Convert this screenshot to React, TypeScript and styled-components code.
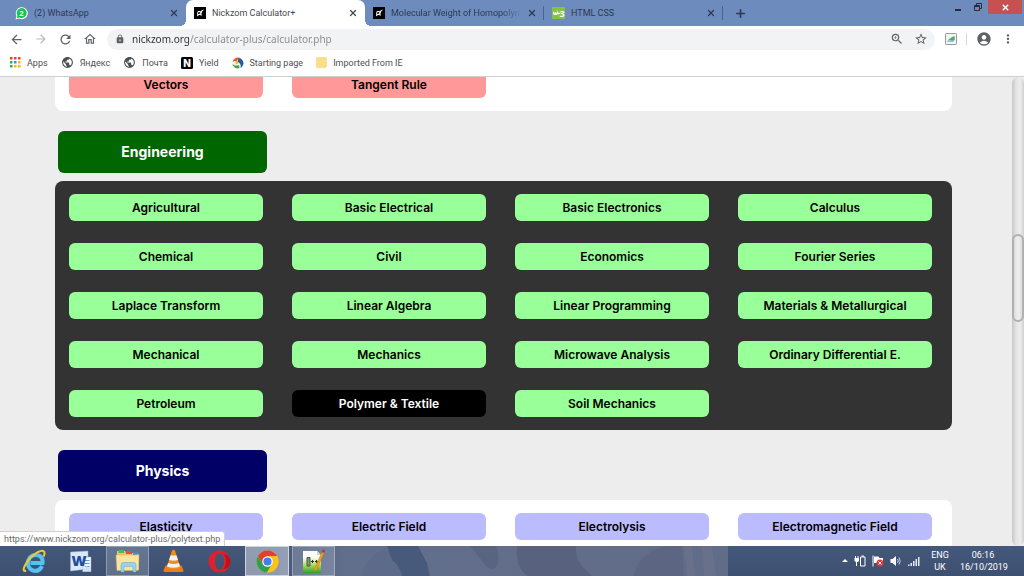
import React from "react";
import styled, { createGlobalStyle, css } from "styled-components";
import { Plus, X } from "lucide-react";
import {
  MdAccountCircle,
  MdArrowBack,
  MdArrowForward,
  MdLock,
  MdMoreVert,
  MdOutlineHome,
  MdPublic,
  MdRefresh,
  MdStarBorder,
  MdZoomIn,
} from "react-icons/md";

const UI_FONT = `Roboto, "Noto Sans", sans-serif`;
const ADDRESS_FONT = `"Noto Sans", "Open Sans", sans-serif`;
const PAGE_FONT = `Inter, "Open Sans", sans-serif`;

const GlobalStyle = createGlobalStyle`
  *, *::before, *::after { box-sizing: border-box; }
  html, body, #root { height: 100%; margin: 0; }
  body { overflow: hidden; background: #ededed; font-family: ${UI_FONT}; }
  button { margin: 0; padding: 0; border: 0; background: none; font: inherit; color: inherit; cursor: pointer; }
  a { color: inherit; text-decoration: none; }
  svg { display: block; flex: none; }
`;

const Screen = styled.div`
  display: flex;
  flex-direction: column;
  height: 100vh;
`;

/* ---------- browser chrome ---------- */

const TabStrip = styled.div`
  display: flex;
  flex: none;
  height: 26px;
  padding-left: 7px;
  background: #6d8bbd;
  color: #2c3a52;
`;

const TabItem = styled.div<{ $active?: boolean; $divider?: boolean }>`
  position: relative;
  display: flex;
  align-items: center;
  gap: 6px;
  flex: 0 1 179px;
  min-width: 0;
  padding: 0 7px 0 8px;
  border-radius: 7px 7px 0 0;
  ${(p) => p.$active && css`
    background: #fff;
    color: #45494d;
    &::before, &::after {
      content: "";
      position: absolute;
      bottom: 0;
      width: 6px;
      height: 6px;
    }
    &::before { right: 100%; background: radial-gradient(circle at 0 0, transparent 6px, #fff 6px); }
    &::after { left: 100%; background: radial-gradient(circle at 100% 0, transparent 6px, #fff 6px); }
  `}
  ${(p) => p.$divider && css`
    &::after {
      content: "";
      position: absolute;
      right: 0;
      top: 6px;
      width: 1px;
      height: 14px;
      background: #4c628a;
    }
  `}
`;

const TabTitle = styled.button<{ $fade?: boolean }>`
  flex: 1;
  min-width: 0;
  overflow: hidden;
  white-space: nowrap;
  text-align: left;
  font-size: 9px;
  line-height: 14px;
  ${(p) => p.$fade && css`
    mask-image: linear-gradient(to right, #000 85%, transparent);
  `}
`;

const IconButton = styled.button<{ $muted?: boolean }>`
  display: grid;
  place-items: center;
  flex: none;
  color: ${(p) => (p.$muted ? "#b9bbbe" : "inherit")};
`;

const NewTab = styled(IconButton)`
  width: 34px;
`;

const WindowControls = styled.div`
  display: flex;
  align-items: flex-start;
  margin-left: auto;
  padding-right: 2px;
`;

const WindowButton = styled.button<{ $close?: boolean }>`
  display: grid;
  place-items: center;
  width: ${(p) => (p.$close ? 34 : 20)}px;
  height: 14px;
  background: ${(p) => (p.$close ? "#c75050" : "transparent")};
  color: ${(p) => (p.$close ? "#fff" : "#252c38")};
`;

const Toolbar = styled.div`
  display: flex;
  align-items: center;
  flex: none;
  gap: 10px;
  height: 26px;
  padding: 0 9px;
  background: #fff;
  color: #5f6368;
`;

const Omnibox = styled.label`
  display: flex;
  align-items: center;
  flex: 1;
  height: 21px;
  padding: 0 7px 0 8px;
  border-radius: 11px;
  background: #f1f3f4;
`;

const Address = styled.input`
  flex: 1;
  min-width: 0;
  height: 18px;
  margin: 0 0 0 7px;
  padding: 0;
  border: 0;
  outline: 0;
  font: 10px/18px ${ADDRESS_FONT};
  color: transparent;
  background: linear-gradient(to right, #2b2d30 57px, #85898d 57px);
  background-clip: text;
`;

const OmniActions = styled.div`
  display: flex;
  gap: 10px;
`;

const ToolbarEnd = styled.div`
  display: flex;
  align-items: center;
  gap: 9px;
`;

const Separator = styled.span`
  width: 1px;
  height: 12px;
  background: #d5d7da;
`;

const Bookmarks = styled.nav`
  display: flex;
  align-items: center;
  flex: none;
  gap: 13px;
  height: 25px;
  padding: 0 10px 3px;
  border-bottom: 1px solid #cdcfd1;
  background: #fff;
  color: #4d5054;
`;

const Bookmark = styled.a`
  display: flex;
  align-items: center;
  gap: 6px;
  font-size: 9px;
  line-height: 14px;
  white-space: nowrap;
`;

/* ---------- page ---------- */

const Viewport = styled.div`
  position: relative;
  display: flex;
  flex: 1;
  min-height: 0;
  overflow: hidden;
  background: #ededed;
`;

const Page = styled.main`
  flex: 1;
  min-width: 0;
  margin-top: -19px;
  padding: 0 60px 0 55px;
  font-family: ${PAGE_FONT};
`;

const Panel = styled.div<{ $dark?: boolean }>`
  display: grid;
  grid-template-columns: repeat(4, 1fr);
  gap: 22px 29px;
  padding: 13px 20px 13px 14px;
  border-radius: 8px;
  background: ${(p) => (p.$dark ? "#333" : "#fff")};
`;

const Topic = styled.a<{ $color: string; $hovered?: boolean }>`
  display: grid;
  place-items: center;
  height: 27px;
  border-radius: 6px;
  background: ${(p) => (p.$hovered ? "#000" : p.$color)};
  color: ${(p) => (p.$hovered ? "#fff" : "#000")};
  font-size: 12px;
  font-weight: 600;
  line-height: 16px;
  white-space: nowrap;
`;

const CategoryButton = styled.button<{ $color: string }>`
  display: block;
  width: 209px;
  height: 42px;
  margin: 20px 0 8px 3px;
  border-radius: 6px;
  background: ${(p) => p.$color};
  color: #fff;
  font-size: 14px;
  font-weight: 700;
  line-height: 20px;
`;

const ScrollTrack = styled.div`
  display: flex;
  flex-direction: column;
  flex: none;
  width: 12px;
  border-radius: 6px;
  background: linear-gradient(to right, #c6c6c6, #e4e4e4 35%, #ececec 70%, #cfcfcf);
  &::before { content: ""; flex: 158; }
  &::after { content: ""; flex: 226; }
`;

const ScrollThumb = styled.div`
  flex: 85;
  border: 2px solid #b0b0b0;
  border-radius: 6px;
  background: linear-gradient(to right, #dcdcdc, #efefef 50%, #dedede);
`;

const StatusBubble = styled.div`
  position: absolute;
  left: 0;
  bottom: 0;
  height: 15px;
  padding: 0 4px;
  border-top: 1px solid #d0d0d0;
  border-right: 1px solid #d0d0d0;
  border-radius: 0 3px 0 0;
  background: #fff;
  color: #6a6a6a;
  font-size: 9px;
  line-height: 14px;
`;

/* ---------- taskbar ---------- */

const Taskbar = styled.footer`
  position: relative;
  display: flex;
  flex: none;
  height: 30px;
  padding-left: 11px;
  background: linear-gradient(#43587c, #3e5070);
  color: #fff;
`;

const Wallpaper = styled.svg`
  position: absolute;
  left: 280px;
  top: 0;
  width: 448px;
  height: 30px;
`;

const TaskButton = styled.button<{ $state?: "open" | "front" }>`
  position: relative;
  display: grid;
  place-items: center;
  width: 46px;
  border: 1px solid transparent;
  ${(p) => p.$state === "open" && css`
    width: 43px;
    border-color: rgba(255, 255, 255, 0.3);
    background: rgba(255, 255, 255, 0.18);
    margin: 0 1px 0 3px;
  `}
  ${(p) => p.$state === "front" && css`
    width: 44px;
    border-color: rgba(255, 255, 255, 0.55);
    background: rgba(255, 255, 255, 0.42);
    margin-left: 3px;
  `}
`;

const Tray = styled.div`
  position: relative;
  display: flex;
  align-items: center;
  gap: 6px;
  margin-left: auto;
  padding-right: 18px;
`;

const TrayText = styled.div<{ $width: number }>`
  width: ${(p) => p.$width}px;
  font-size: 9px;
  line-height: 12px;
  text-align: center;
  white-space: nowrap;
`;

/* ---------- icons ---------- */

const WhatsAppIcon = () => (
  <svg width="13" height="13" viewBox="0 0 26 26">
    <path d="M1 25l2-7A12 12 0 1 1 8 23z" fill="#fff" />
    <path d="M3.500 22.500l1.500-5A10 10 0 1 1 9 21z" fill="#16c651" />
    <text x="13" y="18" fontSize="15" fontWeight="700" textAnchor="middle" fill="#fff" fontFamily="Open Sans">2</text>
  </svg>
);

const NickzomIcon = () => (
  <svg width="12" height="12" viewBox="0 0 24 24">
    <rect width="24" height="24" fill="#000" />
    <path d="M8 9h5l-1 6H7zM16 7l-3 9h3M14 9l5-3M6 18l4-3" fill="none" stroke="#fff" strokeWidth="2" />
  </svg>
);

const W3Icon = () => (
  <svg width="13" height="12" viewBox="0 0 26 24">
    <rect width="26" height="24" rx="2" fill="#82c341" />
    <path d="M3 10l1 4q2 2 3-1 1 3 3 1l1-3q1 4 5 1" fill="none" stroke="#fff" strokeWidth="2.500" />
    <text x="20" y="19" fontSize="18" fontWeight="700" textAnchor="middle" fill="#fff" fontFamily="Open Sans">3</text>
  </svg>
);

const YieldIcon = () => (
  <svg width="12" height="12" viewBox="0 0 24 24">
    <rect width="24" height="24" rx="3" fill="#000" />
    <text x="12" y="19" fontSize="20" fontWeight="800" textAnchor="middle" fill="#fff" fontFamily="Inter">N</text>
  </svg>
);

const AppsIcon = () => (
  <svg width="11" height="11" viewBox="0 0 11 11">
    {["#ea4335", "#ea4335", "#ea4335", "#34a853", "#4285f4", "#fbbc05", "#34a853", "#fbbc05", "#fbbc05"].map((c, i) => (
      <rect key={i} x={(i % 3) * 4} y={Math.floor(i / 3) * 4} width="2.500" height="2.500" fill={c} />
    ))}
  </svg>
);

const StartingPageIcon = () => (
  <svg width="12" height="12" viewBox="0 0 24 24">
    <circle cx="12" cy="12" r="11" fill="#f3f3f3" />
    <path d="M1 10C3 2 12-1 18 3c-6 0-8 3-9 6L5 8z" fill="#e4572e" />
    <path d="M13 3c7-1 10 5 10 10-1 4-3 7-6 9 2-7-1-9-6-13z" fill="#1d5f96" />
    <path d="M1 13c3 5 8 5 13 3l1 6C9 25 1 20 1 13z" fill="#4ba047" />
    <path d="M7 8l8 3-7 4z" fill="#f6b221" />
  </svg>
);

const FolderIcon = () => (
  <svg width="11" height="11" viewBox="0 0 22 22">
    <path d="M1 2q0-1 1-1h18q1 0 1 1v16l-3 3H2q-1 0-1-1z" fill="#fbdf86" stroke="#f2cf66" />
    <path d="M18 21v-3h3z" fill="#e6bd4b" />
  </svg>
);

const ExtensionIcon = () => (
  <svg width="12" height="12" viewBox="0 0 26 26">
    <rect x="1" y="1" width="24" height="24" rx="2" fill="#f4f4f4" stroke="#8b8d8f" strokeWidth="2" />
    <path d="M5 16C10 14 13 8 21 7v8z" fill="#4bb04f" />
    <path d="M4 18l17-4-3 5H4z" fill="#62b8d8" />
  </svg>
);

const MinimizeIcon = () => (
  <svg width="8" height="8" viewBox="0 0 8 8"><rect x="1" y="6" width="6" height="2" fill="currentColor" /></svg>
);

const RestoreIcon = () => (
  <svg width="8" height="8" viewBox="0 0 8 8" fill="none" stroke="currentColor">
    <path d="M2.500 2V.5h5v5H6" />
    <path d="M.5 2.500h5v5h-5zM.5 3.500h5" />
  </svg>
);

const ExplorerShape = () => (
  <svg width="26" height="24" viewBox="0 0 52 48">
    <path d="M4 4h16l2 4h22l4 4v30H4z" fill="#e9c66a" />
    <path d="M7 2h11v6H7z" fill="#54b559" />
    <path d="M22 4h12v6H22z" fill="#d8553f" />
    <path d="M36 7h9v5h-9z" fill="#4a90d9" />
    <path d="M2 12h46l-2 31H4z" fill="#fae49f" stroke="#dcb95a" />
    <path d="M12 46V32q0-5 5-5h20q5 0 5 5v14h-6V35H18v11z" fill="#9ad2ee" stroke="#5ea5cc" />
  </svg>
);

const IeIcon = () => (
  <svg width="25" height="25" viewBox="0 0 50 50">
    <path d="M40 34C36 42 29 45 22 43 13 40 10 31 13 22c3-8 12-12 20-9 6 2 9 8 8 15H17" fill="none" stroke="#55c3f2" strokeWidth="8" />
    <path d="M8 43C-2 48 5 29 18 16 31 4 46-1 45 9c0 2-1 4-2 6" fill="none" stroke="#f6c92f" strokeWidth="4" />
  </svg>
);

const WordIcon = () => (
  <svg width="23" height="23" viewBox="0 0 46 46">
    <path d="M3 4L38 2v36L3 42z" fill="#dce8f7" stroke="#8faed6" />
    <path d="M28 14h16v29H28z" fill="#f4f8fd" stroke="#8faed6" />
    <path d="M31 21h10M31 27h10M31 33h10" stroke="#6d94cd" strokeWidth="2" />
    <text x="20" y="31" fontSize="29" fontWeight="800" textAnchor="middle" fill="#1d4f9f" fontFamily="Open Sans">W</text>
    <path d="M26 43l8-11 10 4v7z" fill="#cfe0f4" />
  </svg>
);

const VlcIcon = () => (
  <svg width="21" height="24" viewBox="0 0 42 48">
    <path d="M5 33h32l4 10q0 3-3 3H4q-3 0-3-3z" fill="#ee7d12" />
    <path d="M18 3q3-3 6 0l11 35q-14 6-28 0z" fill="#f58a1c" />
    <path d="M15 13l12 0 3 9q-9 3-18 0zM10 28q11 4 22 0l2 7q-13 5-26 0z" fill="#f4f1ec" />
  </svg>
);

const OperaIcon = () => (
  <svg width="23" height="23" viewBox="0 0 46 46">
    <path fillRule="evenodd" d="M23 1C10 1 1 11 1 23s9 22 22 22 22-10 22-22S36 1 23 1zm0 6c6 0 9 7 9 16s-3 16-9 16-9-7-9-16 3-16 9-16z" fill="#e0202d" />
    <path d="M30 8c8 4 8 26 0 30 8 1 15-7 15-15S38 7 30 8z" fill="#b8141f" />
  </svg>
);

const ChromeIcon = () => (
  <svg width="23" height="23" viewBox="0 0 48 48">
    <circle cx="24" cy="24" r="23" fill="#fbc316" />
    <path d="M4 12.500A23 23 0 0 1 44 12.500L24 13 14 30z" fill="#e2402f" />
    <path d="M4 12.500A23 23 0 0 0 23 47L33 30 14 30z" fill="#2ea14f" />
    <path d="M24 13h20.200A23 23 0 0 1 23 47L33.500 29.500z" fill="#fbc316" />
    <circle cx="24" cy="24" r="11" fill="#fff" />
    <circle cx="24" cy="24" r="8.500" fill="#3f80ea" />
  </svg>
);

const NotepadIcon = () => (
  <svg width="23" height="25" viewBox="0 0 46 50">
    <defs>
      <linearGradient id="pad" x1="0" y1="0" x2="0" y2="1">
        <stop offset="0.300" stopColor="#fafcf6" />
        <stop offset="0.600" stopColor="#b5e46c" />
        <stop offset="1" stopColor="#2f9f22" />
      </linearGradient>
    </defs>
    <path d="M2 4h28l8 8v36H2z" fill="url(#pad)" />
    <path d="M30 4v8h8z" fill="#cfd4cc" />
    <path d="M10 17h6v17h-6z" fill="#8b9487" stroke="#4b5248" strokeWidth="2" />
    <path d="M18 25h6M21 22v6M26 25h6M29 22v6" stroke="#30372d" strokeWidth="2" />
    <path d="M40 6l4 2-15 34-4 3v-5z" fill="#f1a51e" stroke="#b8740f" />
    <circle cx="43" cy="4" r="3" fill="#b8343c" />
  </svg>
);

const TrayArrow = () => <svg width="6" height="4" viewBox="0 0 6 4"><path d="M3 0l3 3H0z" fill="#fff" /></svg>;

const PowerIcon = () => (
  <svg width="12" height="12" viewBox="0 0 24 24" fill="none" stroke="#fff" strokeWidth="2">
    <path d="M13 4h9v18h-9zM15 2h5M3 2v5M8 2v5M1 7h9M5 12v10" />
    <path d="M1 7h9v4q0 3-4 3-5 0-5-3z" fill="#fff" stroke="none" />
  </svg>
);

const FlagIcon = () => (
  <svg width="12" height="12" viewBox="0 0 24 24">
    <path d="M2 1v22" stroke="#fff" strokeWidth="2" />
    <path d="M4 3h9l2 3h7v10H4z" fill="#fff" />
    <circle cx="16" cy="16" r="7" fill="#d93a32" />
    <path d="M13 13l6 6M19 13l-6 6" stroke="#fff" strokeWidth="2" />
  </svg>
);

const SpeakerIcon = () => (
  <svg width="12" height="12" viewBox="0 0 24 24">
    <path d="M1 8h4l7-6v20l-7-6H1z" fill="#fff" />
    <path d="M15 8q3 4 0 8M18 5q5 7 0 14" fill="none" stroke="#c7d0df" strokeWidth="2" />
  </svg>
);

const SignalIcon = () => (
  <svg width="12" height="12" viewBox="0 0 24 24" fill="#e6eaf0">
    <path d="M0 19h3v3H0zM5 16h3v6H5zM10 12h3v10h-3zM15 8h3v14h-3zM20 4h3v18h-3z" />
  </svg>
);

/* ---------- data ---------- */

const tabs = [
  { title: "(2) WhatsApp", icon: <WhatsAppIcon /> },
  { title: "Nickzom Calculator+", icon: <NickzomIcon />, active: true },
  { title: "Molecular Weight of Homopolym", icon: <NickzomIcon />, divider: true, fade: true },
  { title: "HTML CSS", icon: <W3Icon />, divider: true },
];

const bookmarks = [
  { label: "Apps", icon: <AppsIcon /> },
  { label: "Яндекс", icon: <MdPublic size={13} /> },
  { label: "Почта", icon: <MdPublic size={13} /> },
  { label: "Yield", icon: <YieldIcon /> },
  { label: "Starting page", icon: <StartingPageIcon /> },
  { label: "Imported From IE", icon: <FolderIcon /> },
];

const mathTopics = ["Vectors", "Tangent Rule"];

const engineeringTopics = [
  "Agricultural", "Basic Electrical", "Basic Electronics", "Calculus",
  "Chemical", "Civil", "Economics", "Fourier Series",
  "Laplace Transform", "Linear Algebra", "Linear Programming", "Materials & Metallurgical",
  "Mechanical", "Mechanics", "Microwave Analysis", "Ordinary Differential E.",
  "Petroleum", "Polymer & Textile", "Soil Mechanics",
];

const physicsTopics = ["Elasticity", "Electric Field", "Electrolysis", "Electromagnetic Field"];

type TopicPanelProps = { topics: string[]; color: string; dark?: boolean; hovered?: string };

const TopicPanel = ({ topics, color, dark, hovered }: TopicPanelProps) => (
  <Panel $dark={dark}>
    {topics.map((t) => (
      <Topic key={t} href="#" $color={color} $hovered={t === hovered}>{t}</Topic>
    ))}
  </Panel>
);

export default function App() {
  return (
    <Screen>
      <GlobalStyle />
      <TabStrip>
        {tabs.map((t) => (
          <TabItem key={t.title} $active={t.active} $divider={t.divider}>
            {t.icon}
            <TabTitle $fade={t.fade}>{t.title}</TabTitle>
            <IconButton aria-label="Close tab"><X size={10} strokeWidth={3} /></IconButton>
          </TabItem>
        ))}
        <NewTab aria-label="New tab"><Plus size={13} strokeWidth={3} /></NewTab>
        <WindowControls>
          <WindowButton aria-label="Minimize"><MinimizeIcon /></WindowButton>
          <WindowButton aria-label="Restore"><RestoreIcon /></WindowButton>
          <WindowButton aria-label="Close" $close><X size={9} strokeWidth={4} /></WindowButton>
        </WindowControls>
      </TabStrip>

      <Toolbar>
        <IconButton aria-label="Back"><MdArrowBack size={15} /></IconButton>
        <IconButton aria-label="Forward" $muted><MdArrowForward size={14} /></IconButton>
        <IconButton aria-label="Reload"><MdRefresh size={15} /></IconButton>
        <IconButton aria-label="Home"><MdOutlineHome size={14} /></IconButton>
        <Omnibox>
          <MdLock size={10} />
          <Address aria-label="Address" defaultValue="nickzom.org/calculator-plus/calculator.php" />
          <OmniActions>
            <IconButton aria-label="Zoom"><MdZoomIn size={14} /></IconButton>
            <IconButton aria-label="Bookmark this page"><MdStarBorder size={14} /></IconButton>
          </OmniActions>
        </Omnibox>
        <ToolbarEnd>
          <IconButton aria-label="Extension"><ExtensionIcon /></IconButton>
          <Separator />
          <IconButton aria-label="Profile"><MdAccountCircle size={16} /></IconButton>
          <IconButton aria-label="Menu"><MdMoreVert size={14} /></IconButton>
        </ToolbarEnd>
      </Toolbar>

      <Bookmarks>
        {bookmarks.map((b) => (
          <Bookmark key={b.label} href="#">{b.icon}{b.label}</Bookmark>
        ))}
      </Bookmarks>

      <Viewport>
        <Page>
          <TopicPanel topics={mathTopics} color="#ff9999" />
          <CategoryButton $color="#006600">Engineering</CategoryButton>
          <TopicPanel topics={engineeringTopics} color="#99ff99" dark hovered="Polymer & Textile" />
          <CategoryButton $color="#000066">Physics</CategoryButton>
          <TopicPanel topics={physicsTopics} color="#bbbbff" />
        </Page>
        <ScrollTrack><ScrollThumb /></ScrollTrack>
        <StatusBubble>https://www.nickzom.org/calculator-plus/polytext.php</StatusBubble>
      </Viewport>

      <Taskbar>
        <Wallpaper viewBox="0 0 448 30" preserveAspectRatio="none" aria-hidden="true">
          <defs>
            <linearGradient id="haze" x1="0" x2="1">
              <stop offset="0" stopColor="#46597c" />
              <stop offset="0.150" stopColor="#626f8c" />
              <stop offset="1" stopColor="#616c88" />
            </linearGradient>
          </defs>
          <rect width="448" height="30" fill="url(#haze)" />
          <path d="M82 30Q84 12 106 2l20 28z" fill="#5d6a89" />
          <path d="M107 0h31l9 17 3 13h-28q-2-10-10-16z" fill="#475a7c" />
          <path d="M190 0h26q6 16-2 23-4 1-8-3l-10-13z" fill="#596481" />
          <path d="M237 0h59q-1 12 6 20l10 10h-64q-13-8-11-30z" fill="#58627e" />
          <path d="M354 30q4-24 34-30h14l2 30z" fill="#5c6581" />
          <path d="M404 0h8l3 30h-8zM422 0h10l4 30h-12z" fill="#697089" />
        </Wallpaper>
        <TaskButton aria-label="Internet Explorer"><IeIcon /></TaskButton>
        <TaskButton aria-label="Word"><WordIcon /></TaskButton>
        <TaskButton aria-label="File Explorer" $state="open"><ExplorerShape /></TaskButton>
        <TaskButton aria-label="VLC"><VlcIcon /></TaskButton>
        <TaskButton aria-label="Opera"><OperaIcon /></TaskButton>
        <TaskButton aria-label="Chrome" $state="front"><ChromeIcon /></TaskButton>
        <TaskButton aria-label="Notepad++" $state="open"><NotepadIcon /></TaskButton>
        <Tray>
          <TrayArrow />
          <PowerIcon />
          <FlagIcon />
          <SpeakerIcon />
          <SignalIcon />
          <TrayText $width={28}>ENG<br />UK</TrayText>
          <TrayText $width={46}>06:16<br />16/10/2019</TrayText>
        </Tray>
      </Taskbar>
    </Screen>
  );
}
